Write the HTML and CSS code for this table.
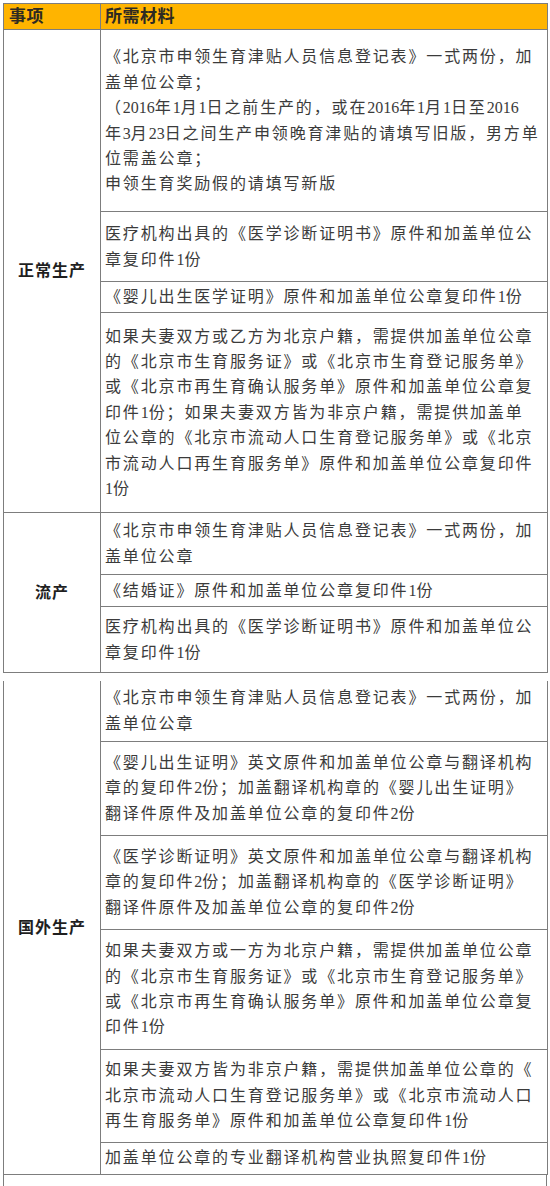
FILE: index.html
```html
<!DOCTYPE html>
<html lang="zh-CN">
<head>
<meta charset="utf-8">
<title>生育津贴申领材料</title>
<link rel="stylesheet" href="styles.css">
</head>
<body>
<div class="page">
  <table class="t t1">
    <colgroup><col class="c1"><col class="c2"></colgroup>
    <thead>
      <tr class="hd"><th class="th1">事项</th><th>所需材料</th></tr>
    </thead>
    <tbody>
      <tr class="h182">
        <td class="lab" rowspan="4">正常生产</td>
        <td>《北京市申领生育津贴人员信息登记表》一式两份，加<br>盖单位公章；<br>（<span class="n">2016</span>年<span class="n">1</span>月<span class="n">1</span>日之前生产的，或在<span class="n">2016</span>年<span class="n">1</span>月<span class="n">1</span>日至<span class="n">2016</span><br>年<span class="n">3</span>月<span class="n">23</span>日之间生产申领晚育津贴的请填写旧版，男方单<br>位需盖公章；<br>申领生育奖励假的请填写新版</td>
      </tr>
      <tr class="h70"><td>医疗机构出具的《医学诊断证明书》原件和加盖单位公<br>章复印件<span class="n">1</span>份</td></tr>
      <tr class="h31"><td>《婴儿出生医学证明》原件和加盖单位公章复印件<span class="n">1</span>份</td></tr>
      <tr class="h200"><td>如果夫妻双方或乙方为北京户籍，需提供加盖单位公章<br>的《北京市生育服务证》或《北京市生育登记服务单》<br>或《北京市再生育确认服务单》原件和加盖单位公章复<br>印件<span class="n">1</span>份；如果夫妻双方皆为非京户籍，需提供加盖单<br>位公章的《北京市流动人口生育登记服务单》或《北京<br>市流动人口再生育服务单》原件和加盖单位公章复印件<br><span class="n">1</span>份</td></tr>
      <tr class="h62">
        <td class="lab" rowspan="3">流产</td>
        <td>《北京市申领生育津贴人员信息登记表》一式两份，加<br>盖单位公章</td>
      </tr>
      <tr class="h32"><td>《结婚证》原件和加盖单位公章复印件<span class="n">1</span>份</td></tr>
      <tr class="h66"><td>医疗机构出具的《医学诊断证明书》原件和加盖单位公<br>章复印件<span class="n">1</span>份</td></tr>
    </tbody>
  </table>

  <table class="t t2">
    <colgroup><col class="c1"><col class="c2"></colgroup>
    <tbody>
      <tr class="h60 first">
        <td class="lab" rowspan="6">国外生产</td>
        <td>《北京市申领生育津贴人员信息登记表》一式两份，加<br>盖单位公章</td>
      </tr>
      <tr class="h94"><td>《婴儿出生证明》英文原件和加盖单位公章与翻译机构<br>章的复印件<span class="n">2</span>份；加盖翻译机构章的《婴儿出生证明》<br>翻译件原件及加盖单位公章的复印件<span class="n">2</span>份</td></tr>
      <tr class="h94"><td>《医学诊断证明》英文原件和加盖单位公章与翻译机构<br>章的复印件<span class="n">2</span>份；加盖翻译机构章的《医学诊断证明》<br>翻译件原件及加盖单位公章的复印件<span class="n">2</span>份</td></tr>
      <tr class="h120"><td>如果夫妻双方或一方为北京户籍，需提供加盖单位公章<br>的《北京市生育服务证》或《北京市生育登记服务单》<br>或《北京市再生育确认服务单》原件和加盖单位公章复<br>印件<span class="n">1</span>份</td></tr>
      <tr class="h93"><td>如果夫妻双方皆为非京户籍，需提供加盖单位公章的《<br>北京市流动人口生育登记服务单》或《北京市流动人口<br>再生育服务单》原件和加盖单位公章复印件<span class="n">1</span>份</td></tr>
      <tr class="h32"><td>加盖单位公章的专业翻译机构营业执照复印件<span class="n">1</span>份</td></tr>
    </tbody>
  </table>
  <div class="tail"></div>
</div>
</body>
</html>
```

FILE: styles.css
```css
html, body {
  margin: 0;
  padding: 0;
  background: #ffffff;
}

.page {
  padding: 3px 0 0 3px;
  width: 544px;
}

.t {
  border-collapse: collapse;
  table-layout: fixed;
  width: 544px;
  font-family: "Liberation Serif", "Noto Sans CJK SC", serif;
}

.c1 { width: 97px; }
.c2 { width: 447px; }

.t th,
.t td {
  border: 1px solid #7d7d7d;
  vertical-align: middle;
  padding: 0 0 0 4px;
}

.t th {
  background: #ffb400;
  text-align: left;
  font-size: 17px;
  font-weight: bold;
  color: #2e2a22;
  height: 25px;
  line-height: 25px;
  letter-spacing: 0.5px;
}

.t th.th1 {
  padding-left: 5px;
}

.t td {
  font-size: 16px;
  line-height: 25.4px;
  letter-spacing: 1.85px;
  color: #3b3b3b;
  white-space: nowrap;
}

.t td.lab {
  text-align: center;
  font-weight: bold;
  color: #1f1f1f;
  letter-spacing: 1px;
  padding: 0;
}

.n {
  letter-spacing: 0;
}

.t2 {
  margin-top: 8px;
}

.t2 .first td {
  border-top: none;
}

.tail {
  height: 14px;
  border-left: 1px solid #7d7d7d;
  border-right: 1px solid #7d7d7d;
}

.h182 { height: 182px; }
.h70 { height: 70px; }
.h31 { height: 31px; }
.h200 { height: 200px; }
.h62 { height: 62px; }
.h32 { height: 32px; }
.h66 { height: 66px; }
.h60 { height: 60px; }
.h94 { height: 94px; }
.h120 { height: 120px; }
.h93 { height: 93px; }
```
